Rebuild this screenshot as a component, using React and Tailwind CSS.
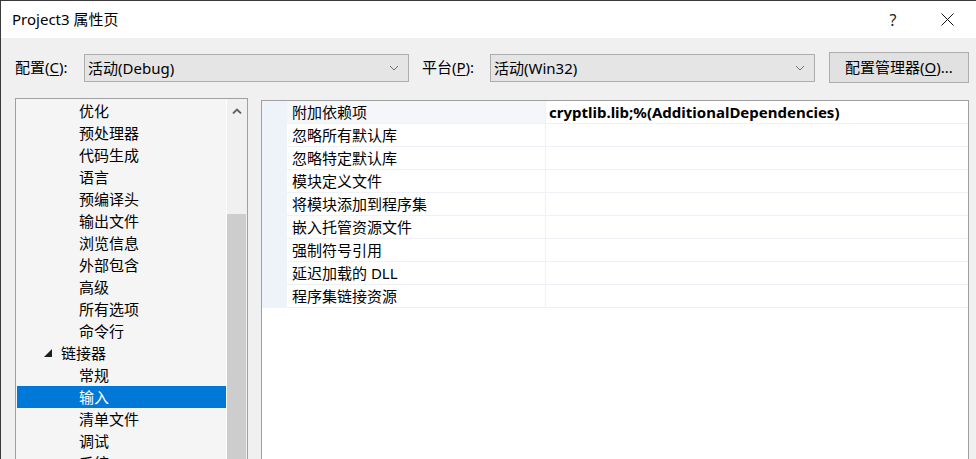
import React from "react";

const FONT = { fontFamily: '"Noto Sans", "Noto Sans CJK SC", sans-serif' };

const treeItems = [
    { label: "优化", level: 2 },
    { label: "预处理器", level: 2 },
    { label: "代码生成", level: 2 },
    { label: "语言", level: 2 },
    { label: "预编译头", level: 2 },
    { label: "输出文件", level: 2 },
    { label: "浏览信息", level: 2 },
    { label: "外部包含", level: 2 },
    { label: "高级", level: 2 },
    { label: "所有选项", level: 2 },
    { label: "命令行", level: 2 },
    { label: "链接器", level: 1, open: true },
    { label: "常规", level: 2 },
    { label: "输入", level: 2, selected: true },
    { label: "清单文件", level: 2 },
    { label: "调试", level: 2 },
    { label: "系统", level: 2 },
];

const props = [
    { name: "附加依赖项", value: "cryptlib.lib;%(AdditionalDependencies)" },
    { name: "忽略所有默认库" },
    { name: "忽略特定默认库" },
    { name: "模块定义文件" },
    { name: "将模块添加到程序集" },
    { name: "嵌入托管资源文件" },
    { name: "强制符号引用" },
    { name: "延迟加载的 DLL" },
    { name: "程序集链接资源" },
];

const Chevron = ({ up }) => (
    <svg width="10" height="6" viewBox="0 0 10 6" className="shrink-0">
        <path
            d={up ? "M1 5.5 L5 1.5 L9 5.5" : "M1 1 L5 5 L9 1"}
            fill="none"
            stroke={up ? "#606060" : "#707070"}
            strokeWidth={up ? "1.8" : "1"}
        />
    </svg>
);

const Combo = ({ text }) => (
    <div className="mt-[2px] h-[28px] w-[325px] border border-[#adadad] bg-[#e5e5e5] flex items-center pl-[3px] pr-[9px]">
        <span className="flex-1 text-[15px] leading-none">{text}</span>
        <Chevron />
    </div>
);

const Key = ({ children }) => <span className="underline underline-offset-2">{children}</span>;

const TitleBar = () => (
    <div className="h-[37px] bg-white flex items-center shrink-0">
        <span className="pl-[11px] text-[15px] leading-none flex-1">Project3 属性页</span>
        <span className="w-[50px] text-center text-[16px] leading-none text-[#222] mr-[4px]">?</span>
        <div className="w-[50px] flex justify-center mr-[4px]">
            <svg width="13" height="13" viewBox="0 0 13 13">
                <path d="M0.5 0.5 L12.5 12.5 M12.5 0.5 L0.5 12.5" stroke="#111" strokeWidth="1" />
            </svg>
        </div>
    </div>
);

const Tree = () => (
    <div className="w-[233px] h-[362px] border border-[#a0a0a0] bg-[#f5f5f5] flex shrink-0">
        <div className="flex-1 pt-[1px] pl-[1px]">
            {treeItems.map((item) => (
                <div
                    key={item.label}
                    className={
                        "h-[22px] flex items-center text-[15px] leading-none " +
                        (item.selected ? "bg-[#0078d7] text-white" : "text-black")
                    }
                >
                    {item.level === 1 ? (
                        <>
                            <svg width="8" height="8" viewBox="0 0 8 8" className="ml-[27px] mr-[9px]">
                                <path d="M8 0 L8 8 L0 8 Z" fill="#1e1e1e" />
                            </svg>
                            <span>{item.label}</span>
                        </>
                    ) : (
                        <span className="pl-[62px]">{item.label}</span>
                    )}
                </div>
            ))}
        </div>
        <div className="w-[21px] bg-[#f0f0f0] border-l border-white flex flex-col">
            <div className="h-[115px] flex justify-center pt-[9px]">
                <Chevron up />
            </div>
            <div className="flex-1 w-[19px] bg-[#cdcdcd]" />
        </div>
    </div>
);

const PropGrid = () => (
    <div className="mt-[2px] w-[708px] h-[360px] border border-[#a0a0a0] bg-white shrink-0">
        {props.map((p, i) => (
            <div key={p.name} className="h-[23px] flex">
                <div className="w-[25px] bg-[#eef2f9]" />
                <div
                    className={
                        "w-[259px] border-b border-r border-[#eef1f6] flex items-center pl-[5px] text-[15px] leading-none " +
                        (i === 0 ? "bg-[#f4f6fa]" : "")
                    }
                >
                    {p.name}
                </div>
                <div className="flex-1 border-b border-[#eef1f6] flex items-center pl-[3px] text-[15px] leading-none font-bold">
                    {p.value}
                </div>
            </div>
        ))}
    </div>
);

export default function App() {
    return (
        <div
            className="w-[976px] h-[459px] overflow-hidden bg-[#f0f0f0] border-t border-l border-[#3a3a3a] flex flex-col text-black"
            style={FONT}
        >
            <TitleBar />

            <div className="mt-[14px] h-[31px] flex items-start pl-[14px] shrink-0">
                <span className="w-[69px] h-[31px] flex items-center text-[15px] leading-none">
                    配置(<Key>C</Key>):
                </span>
                <Combo text="活动(Debug)" />
                <span className="ml-[13px] w-[68px] h-[31px] flex items-center text-[15px] leading-none">
                    平台(<Key>P</Key>):
                </span>
                <Combo text="活动(Win32)" />
                <button className="ml-[14px] w-[140px] h-[31px] border border-[#adadad] bg-[#e1e1e1] text-[15px] leading-none">
                    配置管理器(<Key>O</Key>)...
                </button>
            </div>

            <div className="mt-[15px] flex items-start pl-[14px] gap-[13px]">
                <Tree />
                <PropGrid />
            </div>
        </div>
    );
}
